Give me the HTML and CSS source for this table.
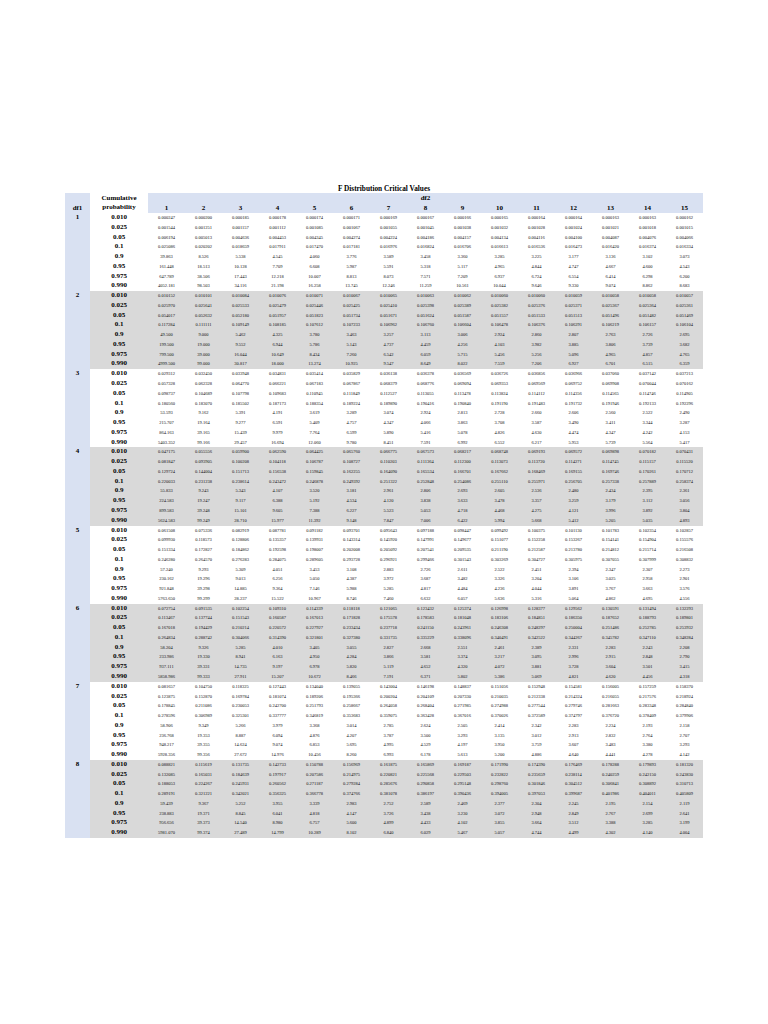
FILE: index.html
```
<!DOCTYPE html>
<html lang="en">
<head>
<meta charset="utf-8">
<title>F Distribution Critical Values</title>
<link rel="stylesheet" href="styles.css">
</head>
<body>
<main class="sheet">
  <h1 class="title">F Distribution Critical Values</h1>
  <div class="head">
    <div class="df1-head">df1</div>
    <div class="prob-head">Cumulative<br>probability</div>
    <div class="df2-band">
      <div class="df2-label">df2</div>
      <div class="num">1</div>
      <div class="num">2</div>
      <div class="num">3</div>
      <div class="num">4</div>
      <div class="num">5</div>
      <div class="num">6</div>
      <div class="num">7</div>
      <div class="num">8</div>
      <div class="num">9</div>
      <div class="num">10</div>
      <div class="num">11</div>
      <div class="num">12</div>
      <div class="num">13</div>
      <div class="num">14</div>
      <div class="num">15</div>
    </div>
  </div>
  <div id="groups" class="groups"></div>
</main>
<script src="script.js"></script>
</body>
</html>
```
FILE: styles.css
```
html, body {
  margin: 0;
  background: #ffffff;
}
body {
  font-family: "Liberation Serif", "Times New Roman", serif;
  color: #000000;
}
.sheet {
  width: 638px;
  margin: 0 0 0 65px;
  padding-top: 184px;
}
.title {
  margin: 0;
  font-size: 7.3px;
  line-height: 9px;
  font-weight: bold;
  text-align: center;
}
.head {
  display: grid;
  grid-template-columns: 25px 58px 555px;
  grid-template-rows: 10px 10px;
  font-weight: bold;
  font-size: 7px;
}
.df1-head {
  grid-column: 1;
  grid-row: 1 / 3;
  background: #d9e1f2;
  display: flex;
  align-items: flex-end;
  justify-content: center;
  line-height: 10px;
}
.prob-head {
  grid-column: 2;
  grid-row: 1 / 3;
  background: #ffffff;
  display: flex;
  align-items: center;
  justify-content: center;
  text-align: center;
  line-height: 9.5px;
}
.df2-band {
  grid-column: 3;
  grid-row: 1 / 3;
  background: #d9e1f2;
  display: grid;
  grid-template-columns: repeat(15, 37px);
  grid-template-rows: 10px 10px;
  line-height: 10px;
  text-align: center;
}
.df2-label {
  grid-column: 8;
  grid-row: 1;
}
.num {
  grid-row: 2;
}
.group {
  display: grid;
  grid-template-columns: 25px 58px repeat(15, 37px);
  grid-auto-rows: 9.77px;
  background: #ffffff;
}
.group.shaded {
  background: #d9d9d9;
}
.df1 {
  grid-column: 1;
  grid-row: 1 / span 8;
  background: #d9e1f2;
  font-weight: bold;
  font-size: 7px;
  line-height: 9.77px;
  text-align: center;
}
.prob {
  font-weight: bold;
  font-size: 7px;
  line-height: 9.77px;
  text-align: center;
  white-space: nowrap;
}
.val {
  font-size: 4.5px;
  line-height: 9.77px;
  text-align: center;
  white-space: nowrap;
  color: #111111;
}
```
FILE: script.js
```
(function () {
  var PROBS = ["0.010", "0.025", "0.05", "0.1", "0.9", "0.95", "0.975", "0.990"];
  var LG = [0.99999999999980993, 676.5203681218851, -1259.1392167224028,
    771.32342877765313, -176.61502916214059, 12.507343278686905,
    -0.13857109526572012, 9.9843695780195716e-6, 1.5056327351493116e-7];

  function lgamma(z) {
    if (z < 0.5) return Math.log(Math.PI / Math.sin(Math.PI * z)) - lgamma(1 - z);
    z -= 1;
    var x = LG[0];
    for (var i = 1; i < 9; i++) x += LG[i] / (z + i);
    var t = z + 7.5;
    return 0.5 * Math.log(2 * Math.PI) + (z + 0.5) * Math.log(t) - t + Math.log(x);
  }

  function betacf(a, b, x) {
    var FPMIN = 1e-300, EPS = 1e-15;
    var qab = a + b, qap = a + 1, qam = a - 1;
    var c = 1, d = 1 - qab * x / qap;
    if (Math.abs(d) < FPMIN) d = FPMIN;
    d = 1 / d;
    var h = d;
    for (var m = 1; m <= 400; m++) {
      var m2 = 2 * m;
      var aa = m * (b - m) * x / ((qam + m2) * (a + m2));
      d = 1 + aa * d; if (Math.abs(d) < FPMIN) d = FPMIN;
      c = 1 + aa / c; if (Math.abs(c) < FPMIN) c = FPMIN;
      d = 1 / d; h *= d * c;
      aa = -(a + m) * (qab + m) * x / ((a + m2) * (qap + m2));
      d = 1 + aa * d; if (Math.abs(d) < FPMIN) d = FPMIN;
      c = 1 + aa / c; if (Math.abs(c) < FPMIN) c = FPMIN;
      d = 1 / d;
      var del = d * c;
      h *= del;
      if (Math.abs(del - 1) < EPS) break;
    }
    return h;
  }

  function ibeta(x, a, b) {
    if (x <= 0) return 0;
    if (x >= 1) return 1;
    var bt = Math.exp(lgamma(a + b) - lgamma(a) - lgamma(b) + a * Math.log(x) + b * Math.log(1 - x));
    if (x < (a + 1) / (a + b + 2)) return bt * betacf(a, b, x) / a;
    return 1 - bt * betacf(b, a, 1 - x) / b;
  }

  function solve(a, b, target) {
    var lo = 0, hi = 1;
    for (var i = 0; i < 160; i++) {
      var mid = (lo + hi) / 2;
      if (ibeta(mid, a, b) < target) lo = mid; else hi = mid;
    }
    return (lo + hi) / 2;
  }

  function fQuantile(p, d1, d2) {
    var a = d1 / 2, b = d2 / 2;
    if (p < 0.5) {
      var x = solve(a, b, p);
      return (d2 / d1) * x / (1 - x);
    }
    var y = solve(b, a, 1 - p);
    return (d2 / d1) * (1 - y) / y;
  }

  var host = document.getElementById("groups");
  var frag = document.createDocumentFragment();
  for (var d1 = 1; d1 <= 8; d1++) {
    var g = document.createElement("section");
    g.className = "group" + (d1 % 2 === 0 ? " shaded" : "");
    var lab = document.createElement("div");
    lab.className = "df1";
    lab.textContent = String(d1);
    g.appendChild(lab);
    for (var r = 0; r < PROBS.length; r++) {
      var ps = PROBS[r], p = parseFloat(ps);
      var pl = document.createElement("div");
      pl.className = "prob";
      pl.textContent = ps;
      g.appendChild(pl);
      for (var d2 = 1; d2 <= 15; d2++) {
        var v = fQuantile(p, d1, d2);
        var cell = document.createElement("div");
        cell.className = "val";
        cell.textContent = p < 0.5 ? v.toFixed(6) : v.toFixed(3);
        g.appendChild(cell);
      }
    }
    frag.appendChild(g);
  }
  host.appendChild(frag);
})();
```
